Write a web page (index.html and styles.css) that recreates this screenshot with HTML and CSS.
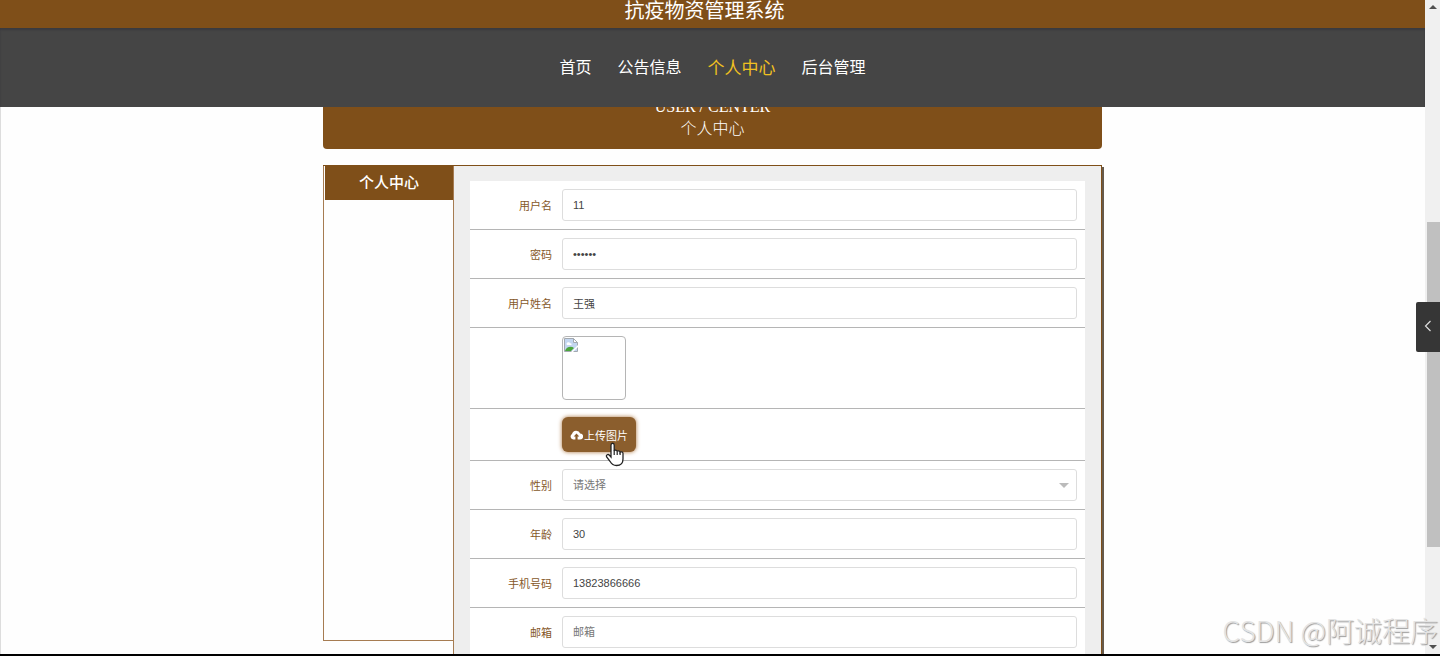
FILE: index.html
```
<!DOCTYPE html>
<html lang="zh-CN">
<head>
  <meta charset="UTF-8">
  <meta name="viewport" content="width=device-width, initial-scale=1.0">
  <title>个人中心 - 抗疫物资管理系统</title>
  <link rel="stylesheet" href="styles.css">
</head>
<body>

  <div class="page">
    <header class="header">
      <h1 class="site-title">抗疫物资管理系统</h1>
      <nav class="nav">
        <a href="#">首页</a>
        <a href="#">公告信息</a>
        <a href="#" class="active">个人中心</a>
        <a href="#">后台管理</a>
      </nav>
    </header>

    <div class="banner">
      <div class="banner-en">USER / CENTER</div>
      <div class="banner-cn">个人中心</div>
    </div>

    <main class="panel">
      <aside class="sidebar">
        <h2 class="sidebar-title">个人中心</h2>
      </aside>

      <div class="content">
        <form class="form">
          <div class="form-row">
            <label for="username">用户名</label>
            <input type="text" id="username" value="11">
          </div>
          <div class="form-row">
            <label for="password">密码</label>
            <input type="password" id="password" value="123456">
          </div>
          <div class="form-row">
            <label for="realname">用户姓名</label>
            <input type="text" id="realname" value="王强">
          </div>
          <div class="form-row photo-row">
            <div class="photo">
              <svg width="16" height="16" viewBox="0 0 16 16">
                <path d="M1.5 1.5h9l4 4v9h-13z" fill="#c3d6f0" stroke="#a3a9b0"/>
                <path d="M10.500 1.500v4h4z" fill="#fff" stroke="#a3a9b0"/>
                <path d="M3.500 7c0-2 3-2.500 3.500-.8C9 6 9 8 8 8H4z" fill="#fff"/>
                <path d="M2 14c1-4 6-5.500 9-3l-3 3z" fill="#4aa53c"/>
                <path d="M8 15l7-7v2l-5 5z" fill="#fff"/>
              </svg>
            </div>
          </div>
          <div class="form-row upload-row">
            <button type="button" class="upload-btn">
              <svg class="cloud" width="13" height="10" viewBox="0 0 13 10">
                <path d="M3.200 9.500A3 3 0 0 1 2 4 4.300 4.300 0 0 1 10.200 3.500 3 3 0 0 1 10 9.500H7.600V6.500h1.700L6.500 3.500 3.700 6.500h1.700v3z" fill="#fff"/>
              </svg>上传图片
              <svg class="pointer" width="20" height="25" viewBox="0 0 20 25">
                <path d="M6 15V3.200C6 .6 9.200.6 9.200 3.200V9c.4-1.300 2.900-1.200 3 .6.500-1.200 2.800-1 2.900.8.700-1 2.900-.6 2.900 1.200V17c0 4-2.600 6.500-6.500 6.500-3.500 0-5-1.500-6.500-4.200L1.500 14.700C.8 13 3 11.800 4.200 13z" fill="#fff" stroke="#222" stroke-width="1.300"/>
                <path d="M9.200 8.500V13M12.200 9.500V13M15.100 10.400V13" stroke="#222" stroke-width="1.200"/>
              </svg>
            </button>
          </div>
          <div class="form-row">
            <label for="gender">性别</label>
            <div class="select-box">
              <select id="gender">
                <option value="">请选择</option>
                <option>男</option>
                <option>女</option>
              </select>
            </div>
          </div>
          <div class="form-row">
            <label for="age">年龄</label>
            <input type="text" id="age" value="30">
          </div>
          <div class="form-row">
            <label for="phone">手机号码</label>
            <input type="text" id="phone" value="13823866666">
          </div>
          <div class="form-row">
            <label for="email">邮箱</label>
            <input type="text" id="email" placeholder="邮箱">
          </div>
        </form>
      </div>
    </main>
  </div>

  <div class="scrollbar">
    <span class="arrow-up"></span>
    <div class="track">
      <div class="thumb"></div>
    </div>
    <span class="arrow-down"></span>
  </div>

  <button type="button" class="side-tab" aria-label="展开">
    <svg width="8" height="12" viewBox="0 0 8 12">
      <path d="M6.500 1L1.500 6l5 5" fill="none" stroke="#ddd" stroke-width="1.200"/>
    </svg>
  </button>

  <div class="watermark">CSDN @阿诚程序</div>

</body>
</html>
```
FILE: styles.css
```
:root {
  --brown: #7f4f19;
  --light-brown: #a67c52;
  --dark: #454545;
  --line: #b5b5b5;
  --input-border: #ddd;
}

* {
  box-sizing: border-box;
}

body {
  margin: 0;
  height: 100vh;
  display: flex;
  position: relative;
  overflow: hidden;
  background: #fefefe;
  border-bottom: 2px solid #000;
  font-family: "Liberation Sans", "Noto Sans CJK SC", sans-serif;
  font-size: 11px;
}

.page {
  flex: 1;
  min-width: 0;
  overflow: hidden;
  box-shadow: inset 1px 0 #ddd;
}

/* Header */
.header {
  position: relative;
  z-index: 1;
}

.site-title {
  margin: 0;
  height: 28px;
  padding-right: 16px;
  background: var(--brown);
  color: #fff;
  font-size: 20px;
  font-weight: normal;
  line-height: 22px;
  text-align: center;
}

.nav {
  height: 79px;
  display: flex;
  justify-content: center;
  align-items: center;
  gap: 26px;
  padding-bottom: 3px;
  background: var(--dark);
  box-shadow: inset 0 2px 2px #3a3a3f;
}

.nav a {
  color: #fff;
  font-size: 16px;
  text-decoration: none;
}

.nav a.active {
  color: #f0c020;
  font-size: 17px;
}

/* Banner, partly scrolled under the header */
.banner {
  max-width: 779px;
  margin: -16px auto 16px;
  padding: 6px 0 10px;
  background: var(--brown);
  border-radius: 4px;
  color: #fff;
  font-size: 16px;
  line-height: 20px;
  text-align: center;
}

.banner-en {
  margin-bottom: 2px;
  font-family: "Liberation Serif", serif;
}

.banner-cn {
  font-weight: 300;
}

/* Panel */
.panel {
  max-width: 779px;
  margin: 0 auto;
  display: flex;
  align-items: flex-start;
  border-top: 1px solid var(--brown);
  border-right: 1px solid var(--brown);
  box-shadow: 2px 2px 0 #665a4c;
}

.sidebar {
  width: 130px;
  height: 475px;
  padding-left: 1px;
  background: #fefefe;
  border: solid var(--light-brown);
  border-width: 0 0 1px 1px;
}

.sidebar-title {
  margin: 0;
  background: var(--brown);
  color: #fff;
  font-size: 15px;
  font-weight: 500;
  line-height: 34px;
  text-align: center;
}

.content {
  flex: 1;
  padding: 15px 16px;
  background: #eee;
  border-left: 1px solid var(--light-brown);
}

.form {
  background: #fff;
}

.form-row {
  display: flex;
  align-items: center;
  gap: 10px;
  padding: 8px;
  border-bottom: 1px solid var(--line);
}

.form-row label {
  width: 74px;
  color: #86582a;
  text-align: right;
}

.form-row input,
.form-row select {
  flex: 1;
  width: 100%;
  height: 32px;
  padding: 0 10px;
  background: #fff;
  border: 1px solid var(--input-border);
  border-radius: 3px;
  color: #444;
  font: inherit;
}

.form-row input::placeholder {
  color: #777;
}

.form-row select {
  display: block;
  appearance: none;
  color: #777;
}

.select-box {
  flex: 1;
  position: relative;
}

.select-box::after {
  content: "";
  position: absolute;
  top: 14px;
  right: 8px;
  border: 5px solid transparent;
  border-top-color: #bbb;
  border-bottom: 0;
  pointer-events: none;
}

.photo-row,
.upload-row {
  padding-left: 92px;
}

.photo {
  width: 64px;
  height: 64px;
  border: 1px solid var(--line);
  border-radius: 4px;
}

.upload-btn {
  position: relative;
  display: flex;
  align-items: center;
  gap: 1px;
  height: 35px;
  padding: 0 8px;
  background: #8b5e2d;
  border: 0;
  border-radius: 6px;
  box-shadow: 0 0 4px #a8713a;
  color: #fff;
  font: inherit;
  cursor: pointer;
}

.pointer {
  position: absolute;
  left: 43px;
  top: 25px;
}

/* Scrollbar */
.scrollbar {
  width: 15px;
  display: flex;
  flex-direction: column;
  align-items: center;
  padding: 5px 0;
  background: #f0f0f0;
}

.arrow-up,
.arrow-down {
  border: 4px solid transparent;
}

.arrow-up {
  border-top: 0;
  border-bottom-color: #505050;
}

.arrow-down {
  border-bottom: 0;
  border-top-color: #505050;
}

.track {
  flex: 1;
  align-self: stretch;
  display: flex;
  flex-direction: column;
  padding-left: 2px;
}

.track::before {
  content: "";
  flex: 213;
}

.track::after {
  content: "";
  flex: 98;
}

.thumb {
  flex: 325;
  background: #c0c0c0;
}

/* Floating items */
.side-tab {
  position: absolute;
  top: calc(50% - 25px);
  right: 0;
  width: 24px;
  height: 50px;
  padding: 0;
  background: #363636;
  border: 0;
  border-radius: 2px 0 0 2px;
}

.watermark {
  position: absolute;
  right: 2px;
  bottom: 4px;
  color: #e4e4e4;
  font-family: "Noto Sans CJK SC", sans-serif;
  font-size: 28px;
  font-weight: 300;
  line-height: 40px;
  text-shadow: 1px 1px 1px #999;
  pointer-events: none;
}
```
